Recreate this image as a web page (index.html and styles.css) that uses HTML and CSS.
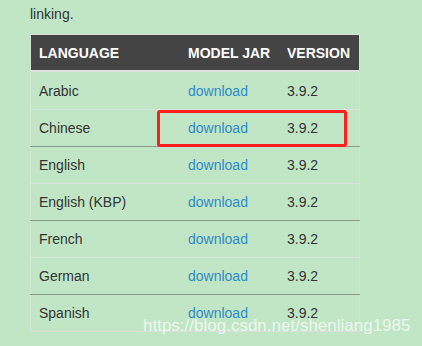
FILE: index.html
```html
<!DOCTYPE html>
<html>
<head>
<meta charset="utf-8">
<link rel="stylesheet" href="styles.css">
</head>
<body>
<div class="page">
  <p class="intro">The English (KBP) models jar has extra resources for entity<br>linking.</p>
  <div class="table-wrap">
    <table class="models">
      <thead>
        <tr><th class="c1">LANGUAGE</th><th class="c2">MODEL JAR</th><th class="c3">VERSION</th></tr>
      </thead>
      <tbody>
        <tr class="first light"><td>Arabic</td><td><a href="#">download</a></td><td>3.9.2</td></tr>
        <tr class="dark"><td>Chinese</td><td><a href="#">download</a></td><td>3.9.2</td></tr>
        <tr class="light"><td>English</td><td><a href="#">download</a></td><td>3.9.2</td></tr>
        <tr class="dark"><td>English (KBP)</td><td><a href="#">download</a></td><td>3.9.2</td></tr>
        <tr class="light"><td>French</td><td><a href="#">download</a></td><td>3.9.2</td></tr>
        <tr class="dark"><td>German</td><td><a href="#">download</a></td><td>3.9.2</td></tr>
        <tr class="last"><td>Spanish</td><td><a href="#">download</a></td><td>3.9.2</td></tr>
      </tbody>
    </table>
    <div class="highlight"></div>
  </div>
</div>
<div class="watermark">https://blog.csdn.net/shenliang1985</div>
</body>
</html>
```
FILE: styles.css
```css
html, body {
  margin: 0;
  padding: 0;
  background: #c1e6c6;
  overflow: hidden;
}
body {
  width: 422px;
  height: 346px;
  position: relative;
  font-family: "Liberation Sans", Arial, sans-serif;
  color: #333;
}
.page {
  padding-left: 30px;
}
.intro {
  margin: -19px 0 0 0;
  width: 388px;
  font-size: 14px;
  line-height: 22px;
  white-space: nowrap;
  overflow: hidden;
  color: #333;
}
.table-wrap {
  position: relative;
  margin-top: 9px;
  width: 330px;
}
.models {
  border-collapse: collapse;
  border: 1px solid #dcdfdc;
  width: 330px;
  font-size: 14px;
  table-layout: fixed;
}
.models th {
  background: #444;
  color: #fff;
  font-weight: bold;
  text-align: left;
  height: 35px;
  padding: 0 0 0 8px;
  border-bottom: 2px solid #dcdfdc;
  vertical-align: middle;
}
.models th.c1 { width: 141px; }
.models th.c2 { width: 91px; }
.models th.c3 { width: 72px; }
.models td {
  height: 36px;
  padding: 0 0 0 8px;
  vertical-align: middle;
  color: #333;
}
.models tr.first td {
  height: 37px;
}
.models tr.light td {
  border-bottom: 1px solid #d9e5da;
}
.models tr.dark td {
  border-bottom: 1px solid #8b9a8c;
}
.models a {
  color: #2f8ac9;
  text-decoration: none;
}
.highlight {
  position: absolute;
  left: 127px;
  top: 76px;
  width: 184px;
  height: 31px;
  border: 3px solid #ff1f1f;
  border-radius: 3px;
}
.watermark {
  position: absolute;
  left: 143px;
  top: 316px;
  font-size: 17px;
  line-height: 20px;
  color: rgba(255, 255, 255, 0.72);
  white-space: nowrap;
}
```
